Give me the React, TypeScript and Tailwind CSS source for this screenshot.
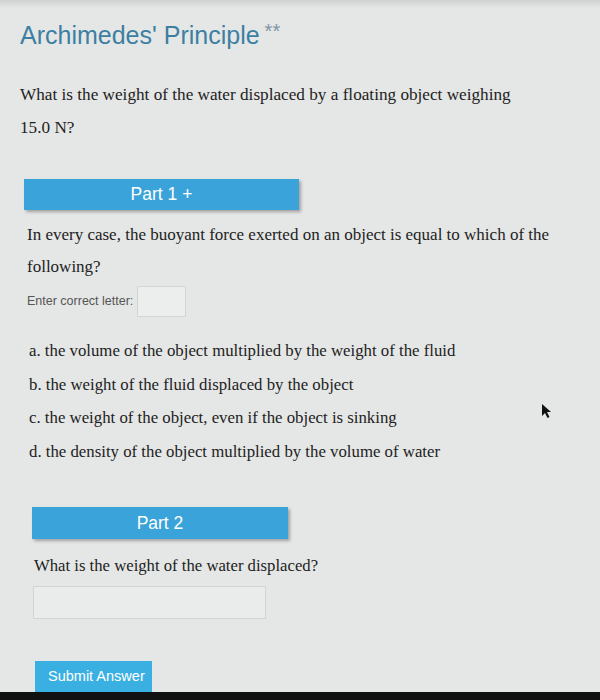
import React from "react";

export default function App() {
  const serif = { fontFamily: '"Liberation Serif", "Times New Roman", serif' };
  return (
    <div className="relative w-[600px] h-[700px] overflow-hidden bg-[#e5e7e6]" style={{ fontFamily: '"Liberation Sans", Arial, sans-serif' }}>
      <div className="h-[8px] bg-gradient-to-b from-[#cfd1d0] to-[#e5e7e6]" />
      <div className="pl-[20px]">
        <div className="mt-[12px] flex items-start h-[30px]">
          <span className="text-[25px] leading-[30px] text-[#3c7fa3]">Archimedes' Principle</span>
          <span className="ml-[5px] mt-[1px] text-[20px] leading-[20px] text-[#7f95a2]">**</span>
        </div>
        <div className="mt-[28px] text-[17.2px] leading-[33px] text-[#222] w-[500px]" style={serif}>
          What is the weight of the water displaced by a floating object weighing 15.0 N?
        </div>
        <div className="mt-[35px] ml-[4px] w-[275px] h-[31px] bg-[#3aa3d9] shadow-[2px_2px_3px_rgba(0,0,0,0.3)] flex items-center justify-center text-white text-[17.5px]">
          Part 1 +
        </div>
        <div className="mt-[9px] ml-[7px] text-[17px] leading-[32px] text-[#222] w-[530px]" style={serif}>
          In every case, the buoyant force exerted on an object is equal to which of the following?
        </div>
        <div className="mt-[3px] ml-[7px] flex items-center h-[31px]">
          <span className="text-[12.5px] text-[#555]">Enter correct letter:</span>
          <div className="ml-[4px] w-[49px] h-[31px] bg-[#eceeed] border border-[#d3d5d4]" />
        </div>
        <div className="mt-[17px] ml-[9px] flex flex-col text-[16.8px] leading-[33.5px] text-[#222]" style={serif}>
          <div>a. the volume of the object multiplied by the weight of the fluid</div>
          <div>b. the weight of the fluid displaced by the object</div>
          <div>c. the weight of the object, even if the object is sinking</div>
          <div>d. the density of the object multiplied by the volume of water</div>
        </div>
        <div className="mt-[39px] ml-[12px] w-[256px] h-[32px] bg-[#3aa3d9] shadow-[2px_2px_3px_rgba(0,0,0,0.3)] flex items-center justify-center text-white text-[17.5px]">
          Part 2
        </div>
        <div className="mt-[16px] ml-[14px] text-[16.7px] leading-[22px] text-[#222]" style={serif}>
          What is the weight of the water displaced?
        </div>
        <div className="mt-[9px] ml-[13px] w-[233px] h-[33px] bg-[#eaeceb] border border-[#d3d5d4]" />
        <div className="mt-[42px] ml-[15px] w-[117px] h-[32px] bg-[#3ab0e2] flex items-center pl-[13px] text-white text-[14.5px]">
          Submit Answer
        </div>
      </div>
      <div className="absolute left-0 right-0 bottom-0 h-[8px] bg-[#111]" />
      <svg className="absolute left-[541px] top-[403px]" width="12" height="16" viewBox="0 0 12 16">
        <path d="M1 1 L1 13 L4 10 L6.5 15 L8.5 14 L6 9 L10 9 Z" fill="#111" />
      </svg>
    </div>
  );
}
